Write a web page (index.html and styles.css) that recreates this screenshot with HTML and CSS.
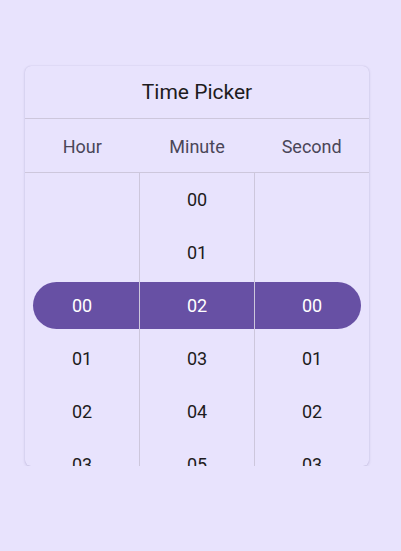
FILE: index.html
```html
<!DOCTYPE html>
<html lang="en">
<head>
  <meta charset="UTF-8">
  <meta name="viewport" content="width=device-width, initial-scale=1">
  <title>Time Picker</title>
  <link rel="stylesheet" href="styles.css">
</head>
<body>
  <div class="card">
    <div class="title">Time Picker</div>
    <div class="labels">
      <div class="label">Hour</div>
      <div class="label">Minute</div>
      <div class="label">Second</div>
    </div>
    <div class="wheels">
      <div class="highlight"></div>
      <div class="wheel">
        <div class="item"></div>
        <div class="item"></div>
        <div class="item selected">00</div>
        <div class="item">01</div>
        <div class="item">02</div>
        <div class="item">03</div>
      </div>
      <div class="wheel">
        <div class="item">00</div>
        <div class="item">01</div>
        <div class="item selected">02</div>
        <div class="item">03</div>
        <div class="item">04</div>
        <div class="item">05</div>
      </div>
      <div class="wheel">
        <div class="item"></div>
        <div class="item"></div>
        <div class="item selected">00</div>
        <div class="item">01</div>
        <div class="item">02</div>
        <div class="item">03</div>
      </div>
    </div>
  </div>
</body>
</html>
```

FILE: styles.css
```css
* {
  box-sizing: border-box;
}
body {
  margin: 0;
  background: #e8e3fd;
  font-family: Roboto, 'Noto Sans', sans-serif;
  color: #1d1b20;
}
.card {
  margin: 66px 0 0 25px;
  width: 344px;
  height: 400px;
  border-radius: 6px;
  background: #e8e3fd;
  box-shadow: 0 1px 3px rgba(60, 50, 110, 0.18), 0 0 1px rgba(60, 50, 110, 0.2);
  overflow: hidden;
  display: flex;
  flex-direction: column;
}
.title {
  height: 53px;
  flex: none;
  display: flex;
  align-items: center;
  justify-content: center;
  font-size: 21px;
  border-bottom: 1px solid #cdc7dc;
}
.labels {
  height: 54px;
  flex: none;
  display: flex;
  padding-top: 2px;
  border-bottom: 1px solid #cdc7dc;
}
.label {
  flex: 1;
  display: flex;
  align-items: center;
  justify-content: center;
  font-size: 18px;
  color: #4a4658;
}
.wheels {
  position: relative;
  flex: 1;
  display: flex;
  overflow: hidden;
}
.highlight {
  position: absolute;
  left: 8px;
  right: 8px;
  top: 109px;
  height: 47px;
  border-radius: 24px;
  background: #6750a4;
}
.wheel {
  position: relative;
  flex: 1;
}
.wheel + .wheel {
  border-left: 1px solid #cdc7dc;
}
.item {
  height: 53px;
  display: flex;
  align-items: center;
  justify-content: center;
  font-size: 18px;
}
.item.selected {
  color: #fff;
}
```
